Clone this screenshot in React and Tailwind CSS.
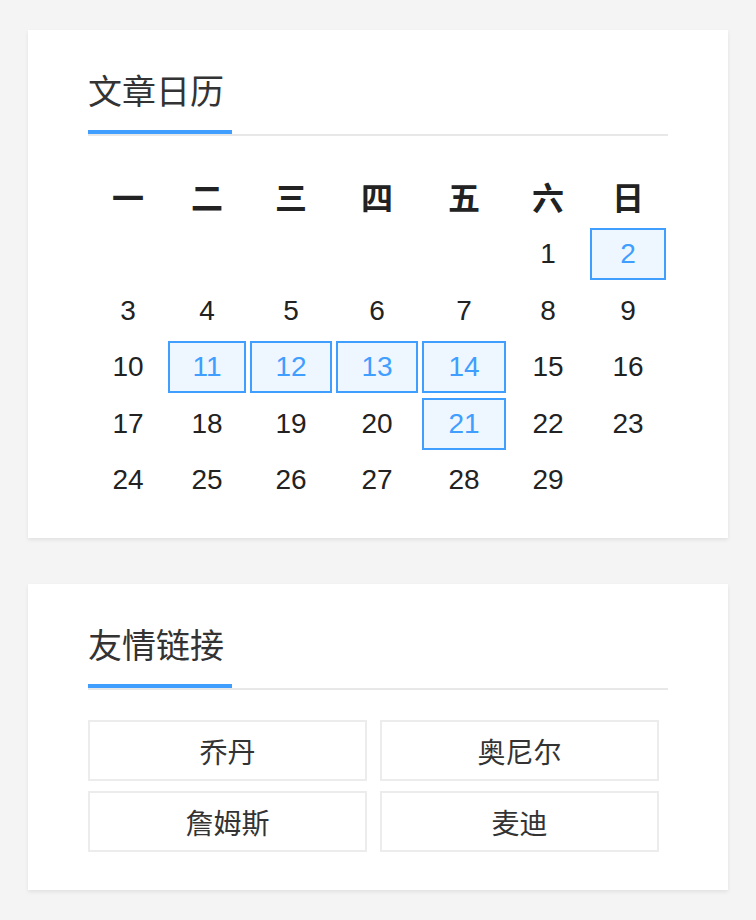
const weekdays = ['一', '二', '三', '四', '五', '六', '日'];

// null = empty cell before the 1st
const days = [null, null, null, null, null, ...Array.from({ length: 29 }, (_, i) => i + 1)];
const marked = [2, 11, 12, 13, 14, 21];

const links = ['乔丹', '奥尼尔', '詹姆斯', '麦迪'];

const cols = 'grid grid-cols-[72px_78px_82px_82px_84px_76px_76px] gap-x-[4px] px-[4px]';

function CardTitle({ children }) {
  return (
    <div className="border-b-2 border-[#e8e8e8]">
      <div className="w-[144px] border-b-4 border-[#409eff] pb-[20px] text-[34px] leading-[40px] text-[#333]">
        {children}
      </div>
    </div>
  );
}

function Calendar() {
  return (
    <section className="bg-white px-[60px] pt-[40px] pb-[32px] shadow-[0_2px_4px_rgba(0,0,0,0.08)]">
      <CardTitle>文章日历</CardTitle>
      <div className={`${cols} mt-[36px]`}>
        {weekdays.map((w) => (
          <div key={w} className="flex h-[48px] items-center justify-center text-[32px] font-semibold text-[#222]">
            {w}
          </div>
        ))}
      </div>
      <div className={`${cols} mt-[8px] gap-y-[4.5px] font-['Liberation_Sans',sans-serif]`}>
        {days.map((d, i) => {
          const on = marked.includes(d);
          return (
            <div
              key={i}
              className={
                on
                  ? 'flex h-[52px] items-center justify-center border-2 border-[#409eff] bg-[#eef6ff] text-[28px] text-[#409eff]'
                  : 'flex h-[52px] items-center justify-center text-[28px] text-[#222]'
              }
            >
              {d}
            </div>
          );
        })}
      </div>
    </section>
  );
}

function Links() {
  return (
    <section className="bg-white px-[60px] pt-[40px] pb-[38px] shadow-[0_2px_4px_rgba(0,0,0,0.08)]">
      <CardTitle>友情链接</CardTitle>
      <div className="mt-[30px] grid grid-cols-[279px_279px] gap-x-[13px] gap-y-[10px]">
        {links.map((l) => (
          <a key={l} href="#" className="flex h-[61px] items-center justify-center border-2 border-[#ececec] text-[28px] text-[#333]">
            {l}
          </a>
        ))}
      </div>
    </section>
  );
}

export default function App() {
  return (
    <div className="min-h-[920px] bg-[#f4f4f4] px-[28px] pt-[30px] font-['Noto_Sans_CJK_SC',sans-serif]">
      <div className="flex flex-col gap-[46px]">
        <Calendar />
        <Links />
      </div>
    </div>
  );
}
